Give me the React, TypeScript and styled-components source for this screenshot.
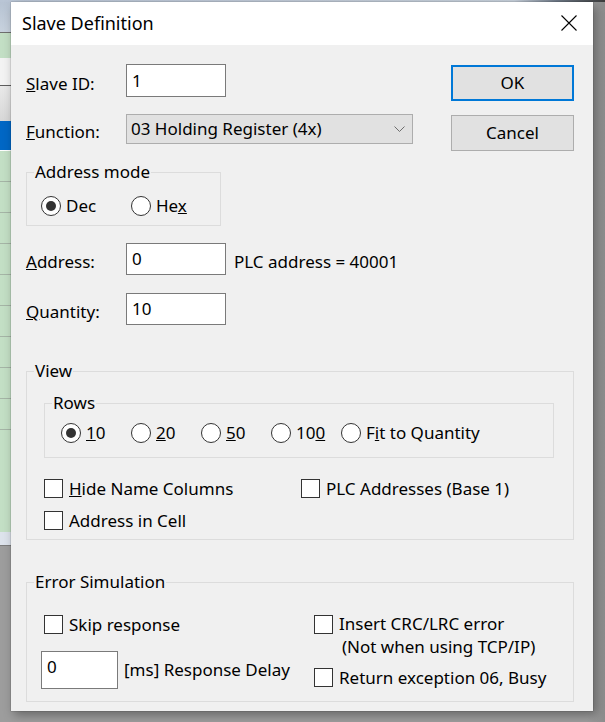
import styled, { createGlobalStyle } from 'styled-components'

const GlobalStyle = createGlobalStyle`
  body {
    margin: 0;
    font-family: "Noto Sans", "Segoe UI", sans-serif;
    font-size: 17px;
    line-height: 20px;
    color: #000;
    background: #9d9d9d;
  }
`

type Cell = { h: number; bg: string; line?: string }

// the spreadsheet window peeking out behind the dialog
const backCells: Cell[] = [
  { h: 30, bg: 'linear-gradient(#b7c3d3, #c8d2de)', line: '#6f6f6f' },
  { h: 25, bg: '#c3dfc5' },
  { h: 27, bg: '#f3f3f3', line: '#5e5e5e' },
  { h: 35, bg: 'linear-gradient(#e9e9e9, #d7d7d7)' },
  { h: 29, bg: '#0067c5', line: '#ffffff' },
  ...Array.from({ length: 9 }, () => ({ h: 30, bg: '#c3dfc5', line: '#a5b5a6' })),
  { h: 102, bg: '#c3dfc5' },
  { h: 13, bg: '#dde3ec', line: '#7c7c7c' },
]

const rowOptions = [
  { pre: '', key: '1', post: '0', checked: true },
  { pre: '', key: '2', post: '0' },
  { pre: '', key: '5', post: '0' },
  { pre: '10', key: '0', post: '' },
  { pre: 'F', key: 'i', post: 't to Quantity' },
]

function App() {
  return (
    <>
      <GlobalStyle />
      <Screen>
        <TopStrip />
        <Stage>
          <BackApp>
            {backCells.map((c, i) => (
              <BackCell key={i} $h={c.h} $bg={c.bg} $line={c.line} />
            ))}
          </BackApp>

          <Dialog>
            <TitleBar>
              <Title>Slave Definition</Title>
              <CloseButton>
                <svg width="16" height="16" viewBox="0 0 16 16">
                  <path d="M0.5 0.5 L15.5 15.5 M15.5 0.5 L0.5 15.5" stroke="#000" strokeWidth="1.1" fill="none" />
                </svg>
              </CloseButton>
            </TitleBar>

            <Body>
              <TopSection>
                <LeftForm>
                  <FieldRow>
                    <Label><u>S</u>lave ID:</Label>
                    <TextBox $w={100} $h={33}>1</TextBox>
                  </FieldRow>
                  <FieldRow $mt={17}>
                    <Label><u>F</u>unction:</Label>
                    <ComboBox>
                      <span>03 Holding Register (4x)</span>
                      <svg width="11" height="6" viewBox="0 0 11 6">
                        <path d="M0.5 0.5 L5.5 5.5 L10.5 0.5" stroke="#6d6d6d" strokeWidth="1" fill="none" />
                      </svg>
                    </ComboBox>
                  </FieldRow>

                  <Group $mt={18} $w={195} $pt={14} $pb={9}>
                    <Legend>Address mode</Legend>
                    <GroupBody $pl={14}>
                      <RadioRow>
                        <RadioItem $w={90}>
                          <Radio $checked />
                          <span>Dec</span>
                        </RadioItem>
                        <RadioItem>
                          <Radio />
                          <span>He<u>x</u></span>
                        </RadioItem>
                      </RadioRow>
                    </GroupBody>
                  </Group>

                  <FieldRow $mt={17}>
                    <Label><u>A</u>ddress:</Label>
                    <TextBox $w={100} $h={32}>0</TextBox>
                    <Note>PLC address = 40001</Note>
                  </FieldRow>
                  <FieldRow $mt={18}>
                    <Label><u>Q</u>uantity:</Label>
                    <TextBox $w={100} $h={32}>10</TextBox>
                  </FieldRow>
                </LeftForm>

                <ButtonColumn>
                  <DlgButton $primary>OK</DlgButton>
                  <DlgButton>Cancel</DlgButton>
                </ButtonColumn>
              </TopSection>

              <Group $mt={36} $pt={12} $pb={9}>
                <Legend>View</Legend>
                <GroupBody $pl={17}>
                  <Group $w={510} $pt={10} $pb={14}>
                    <Legend>Rows</Legend>
                    <GroupBody $pl={16}>
                      <RadioRow>
                        {rowOptions.map((o, i) => (
                          <RadioItem key={i} $w={i < rowOptions.length - 1 ? 70 : undefined}>
                            <Radio $checked={o.checked} />
                            <span>{o.pre}<u>{o.key}</u>{o.post}</span>
                          </RadioItem>
                        ))}
                      </RadioRow>
                    </GroupBody>
                  </Group>
                  <CheckGrid>
                    <CheckItem>
                      <CheckBox />
                      <span><u>H</u>ide Name Columns</span>
                    </CheckItem>
                    <CheckItem>
                      <CheckBox />
                      <span>PLC Addresses (Base 1)</span>
                    </CheckItem>
                    <CheckItem>
                      <CheckBox />
                      <span>Address in Cell</span>
                    </CheckItem>
                  </CheckGrid>
                </GroupBody>
              </Group>

              <Group $mt={32} $pt={23} $pb={12}>
                <Legend>Error Simulation</Legend>
                <GroupBody $pl={17}>
                  <ErrorColumns>
                    <ErrorColumn $w={270}>
                      <CheckItem>
                        <CheckBox />
                        <span>Skip response</span>
                      </CheckItem>
                      <DelayRow>
                        <TextBox $w={77} $h={38} $pb={6}>0</TextBox>
                        <span>[ms] Response Delay</span>
                      </DelayRow>
                    </ErrorColumn>
                    <ErrorColumn>
                      <CheckItem $top>
                        <CheckBox />
                        <MultiLine>
                          <span>Insert CRC/LRC error</span>
                          <Indent>(Not when using TCP/IP)</Indent>
                        </MultiLine>
                      </CheckItem>
                      <CheckItem $mt={10}>
                        <CheckBox />
                        <span>Return exception 06, Busy</span>
                      </CheckItem>
                    </ErrorColumn>
                  </ErrorColumns>
                </GroupBody>
              </Group>
            </Body>
          </Dialog>
        </Stage>
      </Screen>
    </>
  )
}

const Screen = styled.div`
  height: 722px;
  display: flex;
  flex-direction: column;
  overflow: hidden;
  background: linear-gradient(90deg, #9d9d9d 0%, #9d9d9d 97%, #8d8d8d 100%);
`

const TopStrip = styled.div`
  height: 2px;
  background: linear-gradient(90deg, #b9c5d5 0%, #c8d1dc 85%, #6f7a88 92%, #3c3c3c 100%);
`

const Stage = styled.div`
  display: flex;
  align-items: flex-start;
`

const BackApp = styled.div`
  width: 11px;
  display: flex;
  flex-direction: column;
`

const BackCell = styled.div<{ $h: number; $bg: string; $line?: string }>`
  height: ${({ $h }) => $h}px;
  background: ${({ $bg }) => $bg};
  border-bottom: ${({ $line }) => ($line ? `1px solid ${$line}` : 'none')};
`

const Dialog = styled.div`
  width: 582px;
  height: 709px;
  background: #f0f0f0;
  display: flex;
  flex-direction: column;
  box-shadow: 0 0 1px rgba(0, 0, 0, 0.5), 3px 4px 10px rgba(0, 0, 0, 0.35);
`

const TitleBar = styled.div`
  height: 43px;
  background: #fff;
  display: flex;
  align-items: center;
  justify-content: space-between;
  padding: 0 16px 0 11px;
`

const Title = styled.div`
  font-size: 18px;
  padding-bottom: 2px;
`

const CloseButton = styled.div`
  width: 16px;
  height: 16px;
  display: flex;
  margin-bottom: 1px;
`

const Body = styled.div`
  padding: 0 19px 0 15px;
  display: flex;
  flex-direction: column;
`

const TopSection = styled.div`
  display: flex;
  justify-content: space-between;
`

const LeftForm = styled.div`
  display: flex;
  flex-direction: column;
  align-items: flex-start;
  padding-top: 19px;
`

const FieldRow = styled.div<{ $mt?: number }>`
  display: flex;
  align-items: center;
  margin-top: ${({ $mt }) => $mt ?? 0}px;
`

const Label = styled.div`
  width: 100px;
  padding-top: 6px;
`

const TextBox = styled.div<{ $w: number; $h: number; $pb?: number }>`
  box-sizing: border-box;
  width: ${({ $w }) => $w}px;
  height: ${({ $h }) => $h}px;
  background: #fff;
  border: 1px solid #7a7a7a;
  padding: 0 5px ${({ $pb }) => $pb ?? 0}px;
  display: flex;
  align-items: center;
`

const Note = styled.span`
  margin-left: 8px;
  padding-top: 6px;
`

const ComboBox = styled.div`
  box-sizing: border-box;
  width: 287px;
  height: 30px;
  background: #e1e1e1;
  border: 1px solid #adadad;
  padding: 0 7px 0 4px;
  display: flex;
  align-items: center;
  justify-content: space-between;
`

const ButtonColumn = styled.div`
  display: flex;
  flex-direction: column;
  gap: 14px;
  padding-top: 20px;
`

const DlgButton = styled.div<{ $primary?: boolean }>`
  box-sizing: border-box;
  width: 123px;
  height: 36px;
  background: #e1e1e1;
  border: ${({ $primary }) => ($primary ? '2px solid #0078d7' : '1px solid #adadad')};
  display: flex;
  align-items: center;
  justify-content: center;
`

const Group = styled.fieldset<{ $mt?: number; $w?: number; $pt: number; $pb: number }>`
  margin: ${({ $mt }) => $mt ?? 0}px 0 0;
  width: ${({ $w }) => ($w ? `${$w}px` : 'auto')};
  box-sizing: border-box;
  min-width: 0;
  border: 1px solid #dcdcdc;
  padding: ${({ $pt, $pb }) => `${$pt}px 0 ${$pb}px 7px`};
`

const Legend = styled.legend`
  padding: 0 1px;
  line-height: 20px;
`

const GroupBody = styled.div<{ $pl: number }>`
  margin-left: ${({ $pl }) => $pl - 7}px;
`

const RadioRow = styled.div`
  display: flex;
  align-items: center;
`

const RadioItem = styled.div<{ $w?: number }>`
  display: flex;
  align-items: center;
  gap: 5px;
  width: ${({ $w }) => ($w ? `${$w}px` : 'auto')};
`

const Radio = styled.span<{ $checked?: boolean }>`
  box-sizing: border-box;
  width: 20px;
  height: 20px;
  border: 1px solid #333;
  border-radius: 50%;
  background: #fff;
  display: flex;
  align-items: center;
  justify-content: center;

  &::after {
    content: '';
    width: 10px;
    height: 10px;
    border-radius: 50%;
    background: #333;
    display: ${({ $checked }) => ($checked ? 'block' : 'none')};
  }
`

const CheckGrid = styled.div`
  display: grid;
  grid-template-columns: 257px auto;
  row-gap: 13px;
  margin-top: 21px;
`

const CheckItem = styled.div<{ $mt?: number; $top?: boolean }>`
  display: flex;
  align-items: ${({ $top }) => ($top ? 'flex-start' : 'center')};
  gap: 6px;
  height: ${({ $top }) => ($top ? 'auto' : '19px')};
  margin-top: ${({ $mt }) => $mt ?? 0}px;
`

const CheckBox = styled.span`
  box-sizing: border-box;
  flex: none;
  width: 19px;
  height: 19px;
  border: 1px solid #333;
  background: #fff;
`

const ErrorColumns = styled.div`
  display: flex;
`

const ErrorColumn = styled.div<{ $w?: number }>`
  display: flex;
  flex-direction: column;
  width: ${({ $w }) => ($w ? `${$w}px` : 'auto')};
`

const DelayRow = styled.div`
  display: flex;
  align-items: center;
  gap: 6px;
  margin: 17px 0 0 -3px;
`

const MultiLine = styled.div`
  display: flex;
  flex-direction: column;
  line-height: 23px;
  margin-top: -3px;
`

const Indent = styled.span`
  padding-left: 3px;
`

export default App
